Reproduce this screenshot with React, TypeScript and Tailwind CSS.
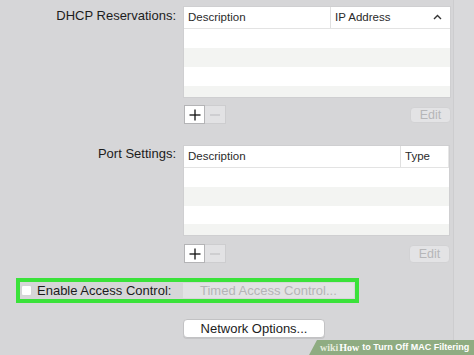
import React from "react";

type Col = { label: string; width?: number; chevron?: boolean };

function Table({
  cols,
  width,
  height,
  rows,
  trailingDivider,
}: {
  cols: Col[];
  width: number;
  height: number;
  rows: number[];
  trailingDivider?: boolean;
}) {
  return (
    <div
      className="ml-[7px] bg-white border border-[#cfcfd1] overflow-hidden flex flex-col"
      style={{ width, height }}
    >
      <div className="h-[22px] flex border-b border-[#e3e3e3] shrink-0">
        {cols.map((c, i) => (
          <div
            key={i}
            className={
              "h-full flex items-center pl-[4px] text-[11.5px] text-[#2a2a2a] " +
              (i > 0 ? "border-l border-[#e0e0e0] " : "") +
              (c.width ? "shrink-0" : "flex-1 pr-[8px]")
            }
            style={c.width ? { width: c.width } : undefined}
          >
            <span>{c.label}</span>
            {c.chevron && (
              <svg width="9" height="6" viewBox="0 0 9 6" className="ml-auto mb-[2px]">
                <polyline points="1,5 4.5,1.5 8,5" fill="none" stroke="#333" strokeWidth="1.4" />
              </svg>
            )}
          </div>
        ))}
        {trailingDivider && <div className="w-[1px] h-full bg-[#e6e6e6] shrink-0" />}
      </div>
      {rows.map((h, i) => (
        <div
          key={i}
          className={i % 2 === 0 ? "bg-white shrink-0" : "bg-[#f3f4f2] shrink-0"}
          style={{ height: h }}
        />
      ))}
    </div>
  );
}

function PlusMinus() {
  return (
    <div className="flex h-[19px]">
      <div className="w-[21px] h-[19px] bg-white border border-[#b4b4b6] flex items-center justify-center">
        <svg width="12" height="12" viewBox="0 0 12 12">
          <line x1="6" y1="0.5" x2="6" y2="11.5" stroke="#111" strokeWidth="1.3" />
          <line x1="0.5" y1="6" x2="11.5" y2="6" stroke="#111" strokeWidth="1.3" />
        </svg>
      </div>
      <div className="w-[21px] h-[19px] bg-[#e2e2e4] border border-[#cdcdcf] border-l-0 flex items-center justify-center">
        <svg width="10" height="2" viewBox="0 0 10 2">
          <line x1="0" y1="1" x2="10" y2="1" stroke="#c2c2c4" strokeWidth="1.2" />
        </svg>
      </div>
    </div>
  );
}

function EditButton({ h, mt }: { h: string; mt: string }) {
  return (
    <div
      className={
        "ml-auto w-[41px] rounded-[4px] bg-[#e3e3e5] border border-[#d2d2d4] flex items-center justify-center text-[12.5px] text-[#b6b6b8] " +
        h +
        " " +
        mt
      }
    >
      Edit
    </div>
  );
}

export default function App() {
  return (
    <div className="w-[474px] h-[355px] overflow-hidden relative flex bg-[#d6d6d8] font-['Liberation_Sans',Arial,sans-serif] text-[#1c1c1c]">
      <div className="w-[453px] shrink-0 flex flex-col pt-[6px]">
        {/* DHCP Reservations */}
        <div className="flex items-start">
          <div className="w-[176px] text-right text-[13px] leading-[16px] mt-[2px]">DHCP Reservations:</div>
          <Table
            cols={[{ label: "Description", width: 146 }, { label: "IP Address", chevron: true }]}
            width={268}
            height={92}
            rows={[19, 19, 19, 19]}
          />
        </div>
        <div className="mt-[7px] flex items-start pl-[184px] pr-[2px]">
          <PlusMinus />
          <EditButton h="h-[16px]" mt="mt-[2px]" />
        </div>

        {/* Port Settings */}
        <div className="mt-[21px] flex items-start">
          <div className="w-[176px] text-right text-[13px] leading-[16px] mt-[1px]">Port Settings:</div>
          <Table
            cols={[{ label: "Description", width: 216 }, { label: "Type" }]}
            width={267}
            height={91}
            rows={[19, 19, 18, 19]}
            trailingDivider
          />
        </div>
        <div className="mt-[8px] flex items-start pl-[184px] pr-[3px]">
          <PlusMinus />
          <EditButton h="h-[18px]" mt="mt-[1px]" />
        </div>

        {/* Enable Access Control (highlighted) */}
        <div className="mt-[15px] ml-[16px] w-[343px] h-[25px] border-[4px] border-[#3ae23a] flex items-center">
          <div className="ml-[1px] w-[11px] h-[11px] bg-white rounded-[2px] border border-[#d4d4d6]" />
          <div className="ml-[5px] text-[13px] leading-[16px]">Enable Access Control:</div>
          <div className="ml-auto mr-[1px] w-[171px] h-[15px] bg-[#e2e2e4] flex items-center pl-[17px] text-[13px] text-[#b4b4b6]">
            Timed Access Control...
          </div>
        </div>

        {/* Network Options */}
        <div className="mt-[16px] ml-[183px] w-[142px] h-[19px] bg-white border border-[#c2c2c4] rounded-[4px] flex items-center justify-center text-[13px] shadow-[0_1px_0_rgba(0,0,0,0.08)]">
          Network Options...
        </div>
      </div>
      <div className="flex-1 border-l border-[#cdcdcf] bg-[#d9d9db]" />

      {/* wikiHow watermark */}
      <div className="absolute right-0 bottom-0 h-[15px] w-[165px] bg-[#8fac82] [clip-path:polygon(8px_0,100%_0,100%_100%,0_100%)] flex items-center pl-[11px] text-white whitespace-nowrap">
        <span className="font-['Liberation_Serif',serif] font-bold text-[10px] text-[#e4ebdc]">wiki</span>
        <span className="font-['Liberation_Serif',serif] font-bold text-[10px] ml-[1px]">How</span>
        <span className="font-bold text-[9px] ml-[3px]">to Turn Off MAC Filtering</span>
      </div>
    </div>
  );
}
